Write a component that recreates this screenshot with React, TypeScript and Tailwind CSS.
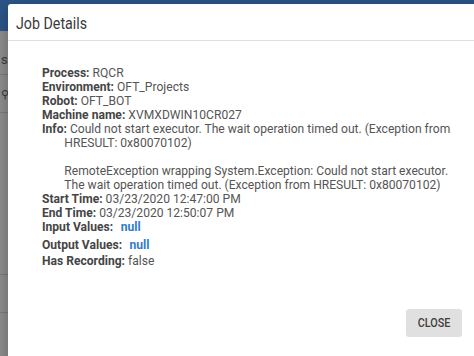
import React from "react";

const Row = ({ label, children }: { label: string; children: React.ReactNode }) => (
  <div className="whitespace-nowrap">
    <span className="font-bold text-[#454545]">{label}</span> <span className="text-[#555]">{children}</span>
  </div>
);

const App = () => {
  return (
    <div className="relative w-[474px] h-[356px] overflow-hidden bg-[#8e8e8e] font-['Roboto',sans-serif]">
      {/* page behind the backdrop */}
      <div className="h-[31px] bg-[#2b5688]" />
      <div className="text-[#3a3a3a] text-[13px]">
        <div className="h-[44px] border-b border-[#7c7c7c] pt-[19px] pl-[1px]">s</div>
        <div className="h-[38px] border-b border-[#7c7c7c] pt-[12px] pl-[1px] text-[11px]">⚲</div>
        <div className="h-[162px] border-b border-[#7c7c7c]" />
        <div className="h-[38px] border-b border-[#7c7c7c]" />
      </div>

      {/* dialog */}
      <div className="absolute left-[8px] top-[4px] w-[480px] h-[360px] bg-white rounded-[3px] shadow-[0_4px_16px_rgba(0,0,0,0.3)] flex flex-col">
        <div className="h-[37px] flex items-center pl-[8px] pt-[3px] border-b border-[#dedede]">
          <span className="inline-block origin-left scale-x-[0.89] text-[16px] text-[#3a3a3a]">Job Details</span>
        </div>
        <div className="ml-[34px] pt-[25px] text-[13px] leading-[14px] origin-left scale-x-[0.93]">
          <Row label="Process:">RQCR</Row>
          <Row label="Environment:">OFT_Projects</Row>
          <Row label="Robot:">OFT_BOT</Row>
          <Row label="Machine name:">XVMXDWIN10CR027</Row>
          <div className="whitespace-nowrap pl-[24px] -indent-[24px]">
            <span className="font-bold text-[#454545]">Info:</span>{" "}
            <span className="text-[#555]">
              Could not start executor. The wait operation timed out. (Exception from
              <br />
              HRESULT: 0x80070102)
              <br />
              <br />
              RemoteException wrapping System.Exception: Could not start executor.
              <br />
              The wait operation timed out. (Exception from HRESULT: 0x80070102)
            </span>
          </div>
          <Row label="Start Time:">03/23/2020 12:47:00 PM</Row>
          <Row label="End Time:">03/23/2020 12:50:07 PM</Row>
          <div className="whitespace-nowrap h-[17px]">
            <span className="font-bold text-[#454545]">Input Values:</span>
            <span className="ml-[8px] font-bold text-[#2f7bd0]">null</span>
          </div>
          <div className="whitespace-nowrap mt-[1px] h-[16px]">
            <span className="font-bold text-[#454545]">Output Values:</span>
            <span className="ml-[8px] font-bold text-[#2f7bd0]">null</span>
          </div>
          <Row label="Has Recording:">false</Row>
        </div>
        <div className="mt-auto mb-[27px] pr-[26px] flex justify-end">
          <button className="w-[56px] h-[28px] rounded-[3px] bg-[#e0e0e0] text-[12px] font-medium text-[#404040]">
            <span className="inline-block scale-x-[0.9]">CLOSE</span>
          </button>
        </div>
      </div>
    </div>
  );
};

export default App;
